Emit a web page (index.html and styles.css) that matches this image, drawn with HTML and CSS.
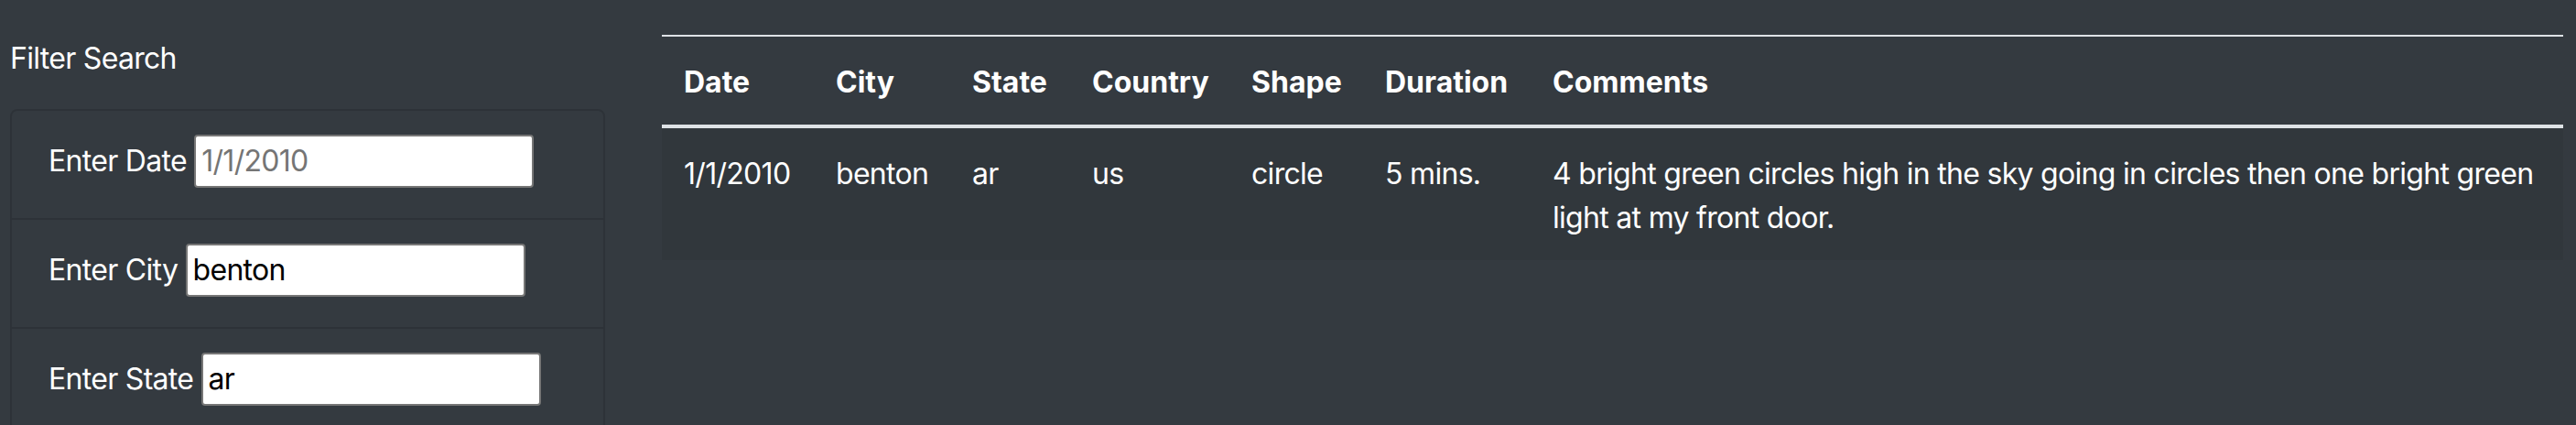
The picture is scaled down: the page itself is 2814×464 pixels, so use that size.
FILE: index.html
```html
<!DOCTYPE html>
<html lang="en">
<head>
<meta charset="utf-8">
<title>UFO Sightings</title>
<link rel="stylesheet" href="styles.css">
</head>
<body>
<div class="page">
  <aside class="sidebar">
    <p class="title">Filter Search</p>
    <ul class="filters">
      <li class="filter-item"><label class="filter-label" for="datetime">Enter Date</label> <input class="filter-input" id="datetime" type="text" placeholder="1/1/2010"></li>
      <li class="filter-item"><label class="filter-label" for="city">Enter City</label> <input class="filter-input" id="city" type="text" value="benton"></li>
      <li class="filter-item"><label class="filter-label" for="state">Enter State</label> <input class="filter-input" id="state" type="text" value="ar"></li>
    </ul>
  </aside>
  <main class="content">
    <table class="ufo-table">
      <colgroup>
        <col class="c-date"><col class="c-city"><col class="c-state"><col class="c-country"><col class="c-shape"><col class="c-duration"><col class="c-comments">
      </colgroup>
      <thead>
        <tr><th>Date</th><th>City</th><th>State</th><th>Country</th><th>Shape</th><th>Duration</th><th>Comments</th></tr>
      </thead>
      <tbody>
        <tr><td>1/1/2010</td><td>benton</td><td>ar</td><td>us</td><td>circle</td><td>5 mins.</td><td>4 bright green circles high in the sky going in circles then one bright green light at my front door.</td></tr>
      </tbody>
    </table>
  </main>
</div>
</body>
</html>
```

FILE: styles.css
```css
html, body {
  margin: 0;
  padding: 0;
}

body {
  background: #343a40;
  color: #fff;
  font-family: Inter, "Liberation Sans", sans-serif;
  font-size: 32px;
  line-height: 48px;
  letter-spacing: -0.7px;
  height: 464px;
  overflow: hidden;
}

.page {
  display: flex;
  align-items: flex-start;
  gap: 62px;
  padding: 38px 14px 0 11px;
}

.sidebar {
  width: 650px;
  flex: none;
}

.title {
  margin: 0 0 31px;
  padding-top: 2px;
  font-size: 32px;
  line-height: 48px;
}

.filters {
  list-style: none;
  margin: 0;
  padding: 0;
  border: 2px solid rgba(0, 0, 0, 0.125);
  border-radius: 8px;
}

.filter-item {
  padding: 26px 40px 22px;
  border-bottom: 2px solid rgba(0, 0, 0, 0.125);
  white-space: nowrap;
}

.filter-item:last-child {
  border-bottom: 0;
}

.filter-label {
  display: inline-block;
  margin-bottom: 16px;
}

.filter-input {
  box-sizing: border-box;
  width: 371px;
  font-family: inherit;
  font-size: 32px;
  line-height: 48px;
  letter-spacing: -0.7px;
  padding: 3px 6px;
  margin: 0;
  border: 2px solid #767676;
  border-radius: 4px;
  background: #fff;
  color: #000;
}

.filter-input::placeholder {
  color: #757575;
}

.content {
  flex: none;
  width: 2077px;
}

.ufo-table {
  width: 100%;
  table-layout: fixed;
  border-collapse: collapse;
}

.c-date { width: 166px; }
.c-city { width: 149px; }
.c-state { width: 131px; }
.c-country { width: 174px; }
.c-shape { width: 146px; }
.c-duration { width: 183px; }
.c-comments { width: 1128px; }

.ufo-table th,
.ufo-table td {
  padding: 26px 24px 22px;
  text-align: left;
  vertical-align: top;
  border-top: 2px solid #dee2e6;
}

.ufo-table th {
  font-weight: 700;
  letter-spacing: 0;
  vertical-align: bottom;
  border-bottom: 4px solid #dee2e6;
}

.ufo-table tbody tr:nth-of-type(odd) {
  background: rgba(0, 0, 0, 0.05);
}
```
